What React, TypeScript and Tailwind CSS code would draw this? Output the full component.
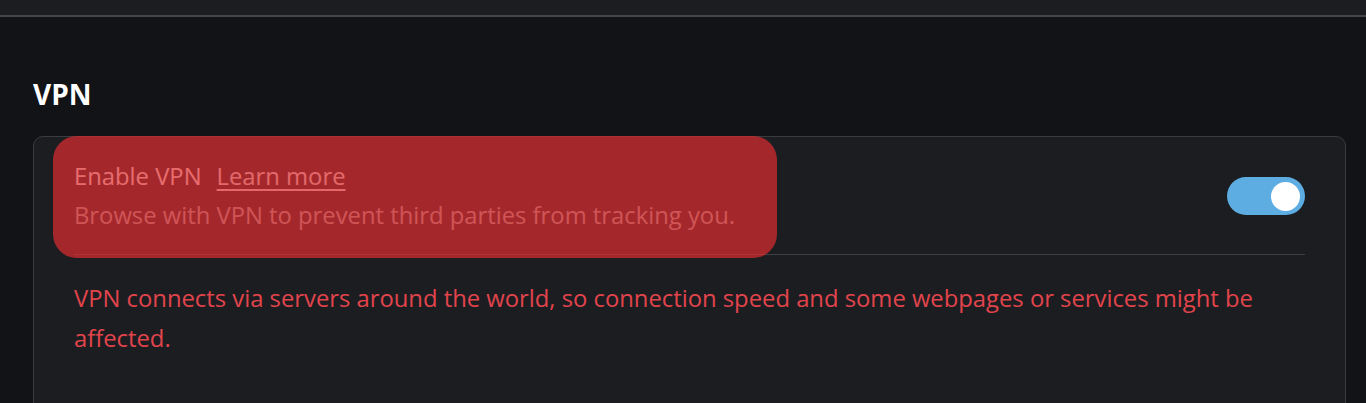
export default function App() {
  return (
    <div
      className="h-[403px] w-full overflow-hidden bg-[#121316] text-[#e8eaed]"
      style={{ fontFamily: '"Open Sans", "Noto Sans", sans-serif' }}
    >
      {/* top toolbar edge */}
      <div className="h-[17px] border-b-2 border-[#45464a] bg-[#1c1d21]" />

      <div className="pl-[33px] pt-[60px] pr-[20px]">
        <h2 className="text-[28px] font-bold leading-[34px] text-white">VPN</h2>

        <div className="relative mt-[25px]">
          <div className="rounded-[10px] border border-[#3a3b3f] bg-[#1c1d21] px-[40px] pb-[120px]">
            <div className="flex items-center justify-between border-b border-[#3f4044] pt-[20px] pb-[19px]">
              <div className="text-[23.8px] leading-[39px]">
                <div className="flex items-baseline gap-[15px]">
                  <span className="text-white">Enable VPN</span>
                  <a href="#" className="text-[#f0f0f0] underline underline-offset-[4px]">
                    Learn more
                  </a>
                </div>
                <div className="text-[#b0b0b0]">
                  Browse with VPN to prevent third parties from tracking you.
                </div>
              </div>

              <button
                type="button"
                aria-label="Enable VPN"
                className="flex h-[38px] w-[78px] items-center justify-end rounded-full bg-[#5dade3] px-[5px]"
              >
                <span className="h-[29px] w-[29px] rounded-full bg-white" />
              </button>
            </div>

            <p className="pt-[23px] text-[23.8px] leading-[40px] text-[#e2444c]">
              VPN connects via servers around the world, so connection speed and some webpages or services might be affected.
            </p>
          </div>

          {/* red highlight laid over the first row */}
          <div className="pointer-events-none absolute left-[20px] top-0 h-[122px] w-[724px] rounded-[24px] bg-[rgba(222,45,49,0.7)]" />
        </div>
      </div>
    </div>
  );
}
